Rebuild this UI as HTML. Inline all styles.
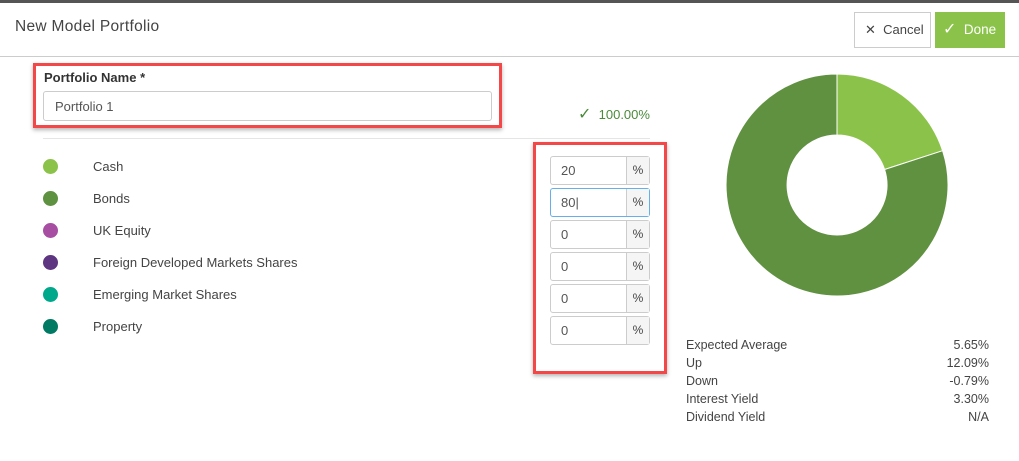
<!DOCTYPE html>
<html><head><meta charset="utf-8"><style>
*{box-sizing:border-box;margin:0;padding:0}
body{width:1019px;height:461px;background:#fff;font-family:"Liberation Sans",sans-serif;color:#333;position:relative;overflow:hidden;font-size:13px}
.a{position:absolute}
.dot{position:absolute;left:43px;width:15px;height:15px;border-radius:50%}
.lbl{position:absolute;left:93px;font-size:13px;color:#444}
.inp{position:absolute;left:550px;width:100px;height:29px;border:1px solid #ccc;border-radius:3px;background:#fff}
.inp span{position:absolute;left:10px;top:6px;font-size:13px;color:#555}
.inp i{position:absolute;right:0;top:0;width:23px;height:27px;border-left:1px solid #ccc;background:#f5f5f5;font-style:normal;font-size:12px;text-align:center;line-height:27px;color:#444}
.st{position:absolute;left:686px;width:303px;font-size:12.5px;color:#444;display:flex;justify-content:space-between}
</style></head><body>
<div class="a" style="left:0;top:0;width:1019px;height:3px;background:#555"></div>
<div class="a" style="left:15px;top:18px;font-size:15.5px;color:#444;letter-spacing:0.3px">New Model Portfolio</div>
<div class="a" style="left:854px;top:12px;width:77px;height:36px;border:1px solid #ccc;font-size:13px;line-height:34px;color:#444;padding-left:10px">✕&nbsp; Cancel</div>
<div class="a" style="left:935px;top:12px;width:70px;height:36px;background:#8bc34a;color:#fff;font-size:13.5px;line-height:36px;padding-left:8px"><span style="font-size:16px">✓</span>&nbsp; Done</div>
<div class="a" style="left:0;top:56px;width:1019px;height:1px;background:#ccc"></div>

<div class="a" style="left:33px;top:63px;width:469px;height:65px;border:3px solid #f44747;box-shadow:0 2px 4px rgba(0,0,0,.3)"></div>
<div class="a" style="left:44px;top:70px;font-size:13px;font-weight:bold;color:#333">Portfolio Name *</div>
<div class="a" style="left:43px;top:91px;width:449px;height:30px;border:1px solid #ccc;border-radius:3px"><span style="position:absolute;left:11px;top:7px;color:#555">Portfolio 1</span></div>

<div class="a" style="left:578px;top:104px;color:#4a8a3a;font-size:13px"><span style="font-size:16px">✓</span>&nbsp; 100.00%</div>
<div class="a" style="left:43px;top:138px;width:607px;height:1px;background:#e5e5e5"></div>

<div class="dot" style="top:159px;background:#8bc34a"></div><div class="lbl" style="top:159px">Cash</div>
<div class="dot" style="top:191px;background:#5e9140"></div><div class="lbl" style="top:191px">Bonds</div>
<div class="dot" style="top:223px;background:#a74ea2"></div><div class="lbl" style="top:223px">UK Equity</div>
<div class="dot" style="top:255px;background:#5e3580"></div><div class="lbl" style="top:255px">Foreign Developed Markets Shares</div>
<div class="dot" style="top:287px;background:#00a88b"></div><div class="lbl" style="top:287px">Emerging Market Shares</div>
<div class="dot" style="top:319px;background:#007a63"></div><div class="lbl" style="top:319px">Property</div>

<div class="a" style="left:533px;top:142px;width:134px;height:232px;border:3px solid #f44747;box-shadow:0 2px 4px rgba(0,0,0,.3)"></div>
<div class="inp" style="top:156px"><span>20</span><i>%</i></div>
<div class="inp" style="top:188px;border-color:#66afe9"><span>80|</span><i>%</i></div>
<div class="inp" style="top:220px"><span>0</span><i>%</i></div>
<div class="inp" style="top:252px"><span>0</span><i>%</i></div>
<div class="inp" style="top:284px"><span>0</span><i>%</i></div>
<div class="inp" style="top:316px"><span>0</span><i>%</i></div>

<svg class="a" style="left:0;top:0" width="1019" height="461">
<path d="M837 74 A111 111 0 0 1 942.6 150.7 L884.6 169.5 A50 50 0 0 0 837 135 Z" fill="#8bc34a" stroke="#fff" stroke-width="1"/>
<path d="M942.6 150.7 A111 111 0 1 1 837 74 L837 135 A50 50 0 1 0 884.6 169.5 Z" fill="#5f9140" stroke="#fff" stroke-width="1"/>
</svg>

<div class="st" style="top:338px"><span>Expected Average</span><span>5.65%</span></div>
<div class="st" style="top:356px"><span>Up</span><span>12.09%</span></div>
<div class="st" style="top:374px"><span>Down</span><span>-0.79%</span></div>
<div class="st" style="top:392px"><span>Interest Yield</span><span>3.30%</span></div>
<div class="st" style="top:410px"><span>Dividend Yield</span><span>N/A</span></div>
</body></html>
